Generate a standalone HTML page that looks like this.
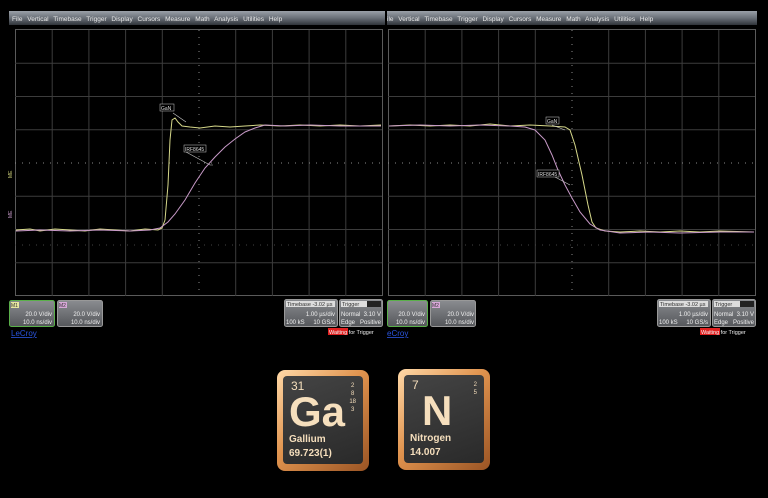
<!DOCTYPE html>
<html><head><meta charset="utf-8"><style>
html,body{margin:0;padding:0;background:#000;width:768px;height:498px;overflow:hidden;font-family:"Liberation Sans",sans-serif}
.tile{position:absolute;width:92px;height:101px;border-radius:8px;background:linear-gradient(135deg,#ffd9a8,#e0934e 45%,#9a5424);box-shadow:0 6px 10px rgba(0,0,0,.8)}
.tile .in{position:absolute;left:6px;top:6px;right:6px;bottom:7px;border-radius:4px;background:linear-gradient(160deg,#444,#2a2a2a);color:#f6dfbd}
.num{position:absolute;left:8px;top:3px;font-size:12px}
.sym{position:absolute;left:6px;top:13px;font-size:42px;line-height:46px;font-weight:bold}
.nm{position:absolute;left:6px;top:58px;font-size:10px;font-weight:bold}
.mass{position:absolute;left:6px;top:72px;font-size:10px;font-weight:bold}
.sh{position:absolute;right:7px;top:6px;font-size:6px;line-height:8px;text-align:center}
</style></head><body>
<svg width="768" height="498" style="position:absolute;left:0;top:0" font-family="Liberation Sans, sans-serif">
<defs>
<linearGradient id="mb" x1="0" y1="0" x2="0" y2="1"><stop offset="0" stop-color="#9aa0a8"/><stop offset=".5" stop-color="#6a7078"/><stop offset="1" stop-color="#30343a"/></linearGradient>
<linearGradient id="bx" x1="0" y1="0" x2="0" y2="1"><stop offset="0" stop-color="#8a8c90"/><stop offset="1" stop-color="#55575b"/></linearGradient>
</defs>
<rect x="9" y="11" width="376" height="14" fill="url(#mb)"/>
<rect x="387" y="11" width="370" height="14" fill="url(#mb)"/>
<text x="12" y="21" font-size="6.5" fill="#e8e8e8" word-spacing="3">File  Vertical  Timebase  Trigger  Display  Cursors  Measure  Math  Analysis  Utilities  Help</text>
<text x="387" y="21" font-size="6.5" fill="#e8e8e8" word-spacing="3">ile  Vertical  Timebase  Trigger  Display  Cursors  Measure  Math  Analysis  Utilities  Help</text>
<g stroke="#3c3c3c" stroke-width="1" fill="none">
<rect x="15.5" y="29.5" width="367" height="266" stroke="#5a5a5a"/>
<path d="M52.2 30V296M88.9 30V296M125.6 30V296M162.3 30V296M235.7 30V296M272.4 30V296M309.1 30V296M345.8 30V296M15 63.25H382M15 96.5H382M15 129.75H382M15 196.25H382M15 229.5H382M15 262.75H382"/>
<rect x="388.5" y="29.5" width="367" height="266" stroke="#5a5a5a"/>
<path d="M425.2 30V296M461.9 30V296M498.6 30V296M535.3 30V296M608.7 30V296M645.4 30V296M682.1 30V296M718.8 30V296M388 63.25H755M388 96.5H755M388 129.75H755M388 196.25H755M388 229.5H755M388 262.75H755"/>
</g>
<g stroke="#8a8a8a" stroke-width="1" stroke-dasharray="1 6">
<path d="M15 163H382M199 30V296M388 163H755M572 30V296"/>
</g>
<g stroke="#444" stroke-dasharray="1 6"><path d="M15 245H382M388 245H755"/></g>
<text x="12" y="178" font-size="5" fill="#cfd27a" transform="rotate(-90 12 178)">ME</text>
<text x="12" y="218" font-size="5" fill="#c79ac8" transform="rotate(-90 12 218)">ME</text>
<path d="M16 230 L30 229 L40 231 L55 229 L70 230 L85 231 L100 229 L115 230 L130 231 L145 229 L158 230 L162 228 L165 220 L168 185 L170 140 L172 120 L175 118 L178 122 L182 126 L190 127 L200 128 L215 126 L230 127 L245 126 L260 125 L280 126 L300 125 L320 126 L340 125 L360 126 L381 125" stroke="#d6d88a" stroke-width="1" fill="none"/>
<path d="M16 231 L40 230 L70 231 L100 230 L130 231 L150 230 L160 228 L168 222 L175 214 L185 200 L195 183 L205 168 L215 157 L225 147 L235 139 L245 132 L255 128 L265 125 L285 126 L310 125 L340 126 L381 126" stroke="#c89ac8" stroke-width="1" fill="none"/>
<path d="M173 113 L186 122 M186 152 L210 165 L213 165" stroke="#ccc" stroke-width=".6" fill="none"/>
<rect x="160" y="104" width="14" height="7" fill="#000" stroke="#ccc" stroke-width=".5"/>
<text x="161" y="110" font-size="5" fill="#ddd">GaN</text>
<rect x="184" y="145" width="22" height="7" fill="#000" stroke="#ccc" stroke-width=".5"/>
<text x="185" y="151" font-size="5" fill="#ddd">IRF8645</text>
<path d="M389 126 L410 125 L430 126 L450 125 L470 126 L490 124 L510 126 L530 125 L550 126 L565 127 L570 130 L575 145 L582 175 L588 205 L592 222 L596 228 L605 231 L620 232 L640 231 L660 232 L680 231 L700 232 L720 231 L754 232" stroke="#d6d88a" stroke-width="1" fill="none"/>
<path d="M389 126 L420 125 L450 126 L480 125 L510 126 L525 127 L535 130 L545 140 L552 155 L558 170 L565 185 L572 198 L580 212 L590 224 L600 230 L620 233 L650 232 L680 233 L720 232 L754 232" stroke="#c89ac8" stroke-width="1" fill="none"/>
<path d="M552 125 L565 130 M555 177 L570 185" stroke="#ccc" stroke-width=".6" fill="none"/>
<rect x="546" y="117" width="13" height="7" fill="#000" stroke="#ccc" stroke-width=".5"/>
<text x="547" y="123" font-size="5" fill="#ddd">GaN</text>
<rect x="537" y="170" width="22" height="7" fill="#000" stroke="#ccc" stroke-width=".5"/>
<text x="538" y="176" font-size="5" fill="#ddd">IRF8645</text>
<g font-size="6" fill="#f0f0f0">
<rect x="9.5" y="300.5" width="45" height="26" rx="2" fill="url(#bx)" stroke="#5ab04a"/>
<rect x="11" y="302" width="8" height="6" fill="#e8e8a0"/><text x="11" y="307" font-size="5" fill="#333">M1</text>
<text x="52" y="316" text-anchor="end">20.0 V/div</text><text x="52" y="324" text-anchor="end">10.0 ns/div</text>
<rect x="57.5" y="300.5" width="45" height="26" rx="2" fill="url(#bx)" stroke="#999"/>
<rect x="59" y="302" width="8" height="6" fill="#d8a8d8"/><text x="59" y="307" font-size="5" fill="#333">M2</text>
<text x="100" y="316" text-anchor="end">20.0 V/div</text><text x="100" y="324" text-anchor="end">10.0 ns/div</text>
<rect x="284.5" y="299.5" width="53" height="27" rx="2" fill="url(#bx)" stroke="#999"/>
<rect x="286" y="301" width="49" height="6" fill="#ddd"/><text x="287" y="306" font-size="5.5" fill="#333">Timebase  -3.02 µs</text>
<text x="335" y="316" text-anchor="end">1.00 µs/div</text><text x="286" y="324">100 kS</text><text x="335" y="324" text-anchor="end">10 GS/s</text>
<rect x="339.5" y="299.5" width="43" height="27" rx="2" fill="url(#bx)" stroke="#999"/>
<rect x="341" y="301" width="40" height="6" fill="#ddd"/><text x="342" y="306" font-size="5.5" fill="#333">Trigger</text><rect x="367" y="301" width="14" height="6" fill="#222"/>
<text x="341" y="316">Normal</text><text x="381" y="316" text-anchor="end">3.10 V</text><text x="341" y="324">Edge</text><text x="381" y="324" text-anchor="end">Positive</text>
<rect x="328" y="328" width="20" height="7" fill="#e02020"/><text x="329" y="334" font-size="5.5">Waiting for Trigger</text>
</g>
<text x="11" y="336" font-size="8" fill="#2a55e0" text-decoration="underline">LeCroy</text>
<g font-size="6" fill="#f0f0f0">
<rect x="387.5" y="300.5" width="40" height="26" rx="2" fill="url(#bx)" stroke="#5ab04a"/>
<text x="425" y="316" text-anchor="end">20.0 V/div</text><text x="425" y="324" text-anchor="end">10.0 ns/div</text>
<rect x="430.5" y="300.5" width="45" height="26" rx="2" fill="url(#bx)" stroke="#999"/>
<rect x="432" y="302" width="8" height="6" fill="#d8a8d8"/><text x="432" y="307" font-size="5" fill="#333">M2</text>
<text x="474" y="316" text-anchor="end">20.0 V/div</text><text x="474" y="324" text-anchor="end">10.0 ns/div</text>
<rect x="657.5" y="299.5" width="53" height="27" rx="2" fill="url(#bx)" stroke="#999"/>
<rect x="659" y="301" width="49" height="6" fill="#ddd"/><text x="660" y="306" font-size="5.5" fill="#333">Timebase  -3.02 µs</text>
<text x="708" y="316" text-anchor="end">1.00 µs/div</text><text x="659" y="324">100 kS</text><text x="708" y="324" text-anchor="end">10 GS/s</text>
<rect x="712.5" y="299.5" width="43" height="27" rx="2" fill="url(#bx)" stroke="#999"/>
<rect x="714" y="301" width="40" height="6" fill="#ddd"/><text x="715" y="306" font-size="5.5" fill="#333">Trigger</text><rect x="740" y="301" width="14" height="6" fill="#222"/>
<text x="714" y="316">Normal</text><text x="754" y="316" text-anchor="end">3.10 V</text><text x="714" y="324">Edge</text><text x="754" y="324" text-anchor="end">Positive</text>
<rect x="700" y="328" width="20" height="7" fill="#e02020"/><text x="701" y="334" font-size="5.5">Waiting for Trigger</text>
</g>
<text x="387" y="336" font-size="8" fill="#2a55e0" text-decoration="underline">eCroy</text>
</svg>
<div class="tile" style="left:277px;top:370px"><div class="in">
<div class="num">31</div><div class="sym">Ga</div><div class="sh">2<br>8<br>18<br>3</div>
<div class="nm">Gallium</div><div class="mass">69.723(1)</div></div></div>
<div class="tile" style="left:398px;top:369px"><div class="in">
<div class="num">7</div><div class="sym" style="left:18px">N</div><div class="sh">2<br>5</div>
<div class="nm">Nitrogen</div><div class="mass">14.007</div></div></div>
</body></html>
